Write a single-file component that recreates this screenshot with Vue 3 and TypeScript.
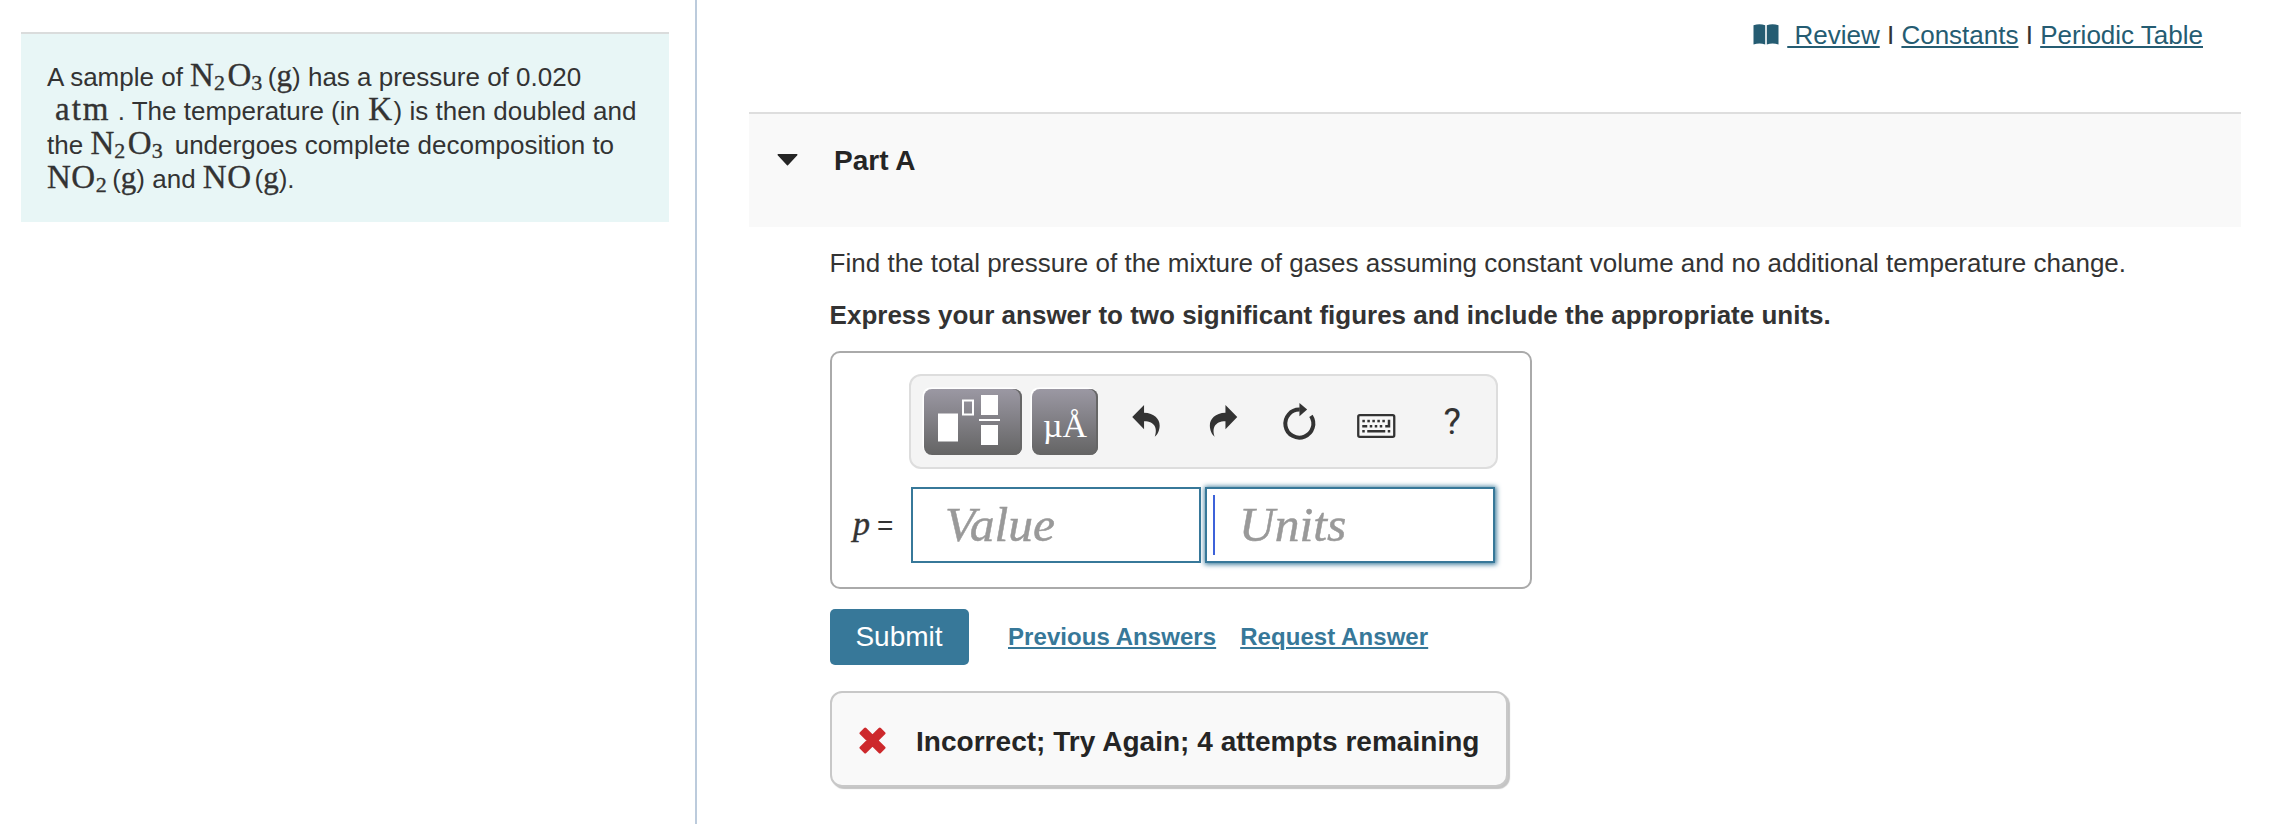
<script setup lang="ts">
import { ref } from 'vue'

const value = ref('')
const units = ref('')
const open = ref(true)
const attempts = 4
const topKeys = [-12.6, -7.6, -2.6, 2.4, 7.4]
const midKeys = [-5.2, -0.2, 4.8]
</script>

<template>
  <div class="page">
    <aside class="side">
      <div class="problem">
        <div class="line">A sample of <span class="m">N</span><sub>2</sub><span class="m thin">O</span><sub>3</sub><span class="state">(<span class="g">g</span>)</span> has a pressure of 0.020</div>
        <div class="line indent"><span class="m atm">atm</span> . The temperature (in <span class="m kelvin">K</span>) is then doubled and</div>
        <div class="line">the <span class="m">N</span><sub>2</sub><span class="m thin">O</span><sub class="wide">3</sub> undergoes complete decomposition to</div>
        <div class="line"><span class="m no">NO</span><sub>2</sub><span class="state">(<span class="g">g</span>)</span> and <span class="m no">NO</span><span class="state tight">(<span class="g">g</span>)</span>.</div>
      </div>
    </aside>

    <main class="content">
      <nav class="links">
        <svg class="book" width="26" height="21" viewBox="0 0 25 21">
          <path d="M0 1.3Q6-.8 11.7 1.3V20.4Q6 18.6 0 20.4ZM13.3 1.3Q19-.8 25 1.3V20.4Q19 18.6 13.3 20.4Z" fill="#255c72" />
        </svg>
        <span class="trio"><a class="review">&nbsp;Review</a> I <a>Constants</a> I <a>Periodic Table</a></span>
      </nav>

      <header class="part" @click="open = !open">
        <svg class="caret" width="21" height="12" viewBox="0 0 21 12">
          <path d="M1.2.8H19.8L10.5 10.7Z" fill="#252525" stroke="#252525" stroke-width="1.4" stroke-linejoin="round" />
        </svg>
        <h2>Part A</h2>
      </header>

      <section v-show="open" class="body">
        <p>Find the total pressure of the mixture of gases assuming constant volume and no additional temperature change.</p>
        <p class="strong">Express your answer to two significant figures and include the appropriate units.</p>

        <div class="answer">
          <div class="toolbar">
            <button class="tool templates">
              <svg width="98" height="66" viewBox="0 0 98 66">
                <g fill="#fff">
                  <rect x="14" y="24.5" width="20" height="28" />
                  <rect x="57" y="6" width="17" height="20" />
                  <rect x="55" y="30" width="21" height="2" />
                  <rect x="57" y="36" width="17" height="20" />
                </g>
                <rect x="39" y="11.5" width="10" height="14" fill="none" stroke="#fff" stroke-width="2" />
              </svg>
            </button>
            <button class="tool symbols"><span>µÅ</span></button>
            <div class="icons">
              <svg viewBox="-38 -33 76 66"><path d="M-14-5-2.2-17V-9.2C8-9 13.4-3 13.4 3.5 13.4 8 11.5 12.5 8.5 14.8 11.5 7 9-.8-2.2-.8V7.3Z" fill="#333" /></svg>
              <svg viewBox="-38 -33 76 66"><path d="M14-5 2.2-17V-9.2C-8-9-13.4-3-13.4 3.5-13.4 8-11.5 12.5-8.5 14.8-11.5 7-9-.8 2.2-.8V7.3Z" fill="#333" /></svg>
              <svg viewBox="-38 -33 76 66">
                <path d="M11.7-6.2A14 14 0 1 1 .5-12.4" fill="none" stroke="#333" stroke-width="4" />
                <path d="M.2-19 7.9-12.4 .2-5.8Z" fill="#333" />
              </svg>
              <svg viewBox="-38 -33 76 66">
                <rect x="-18" y="-6.8" width="36" height="21.6" rx="1.5" fill="#f7f7f7" stroke="#333" stroke-width="2.3" />
                <g fill="#333">
                  <rect v-for="x in topKeys" :key="'t' + x" :x="x - 1.3" y="-2.2" width="2.5" height="2.5" />
                  <rect v-for="x in midKeys" :key="'m' + x" :x="x - 1.3" y="3" width="2.5" height="2.5" />
                  <rect x="-14" y="3" width="5" height="2.5" />
                  <path d="M11.5-2.2H14V5.5H9V3H11.5Z" />
                  <rect x="-14" y="8" width="2.5" height="2.5" />
                  <rect x="-9" y="8" width="18" height="2.5" />
                  <rect x="11.5" y="8" width="2.5" height="2.5" />
                </g>
              </svg>
              <span class="help">?</span>
            </div>
          </div>
          <div class="fields">
            <label><i>p</i><span>=</span></label>
            <div class="field"><input v-model="value" placeholder="Value" /></div>
            <div class="field focus"><input v-model="units" placeholder="Units" /><span class="cursor"></span></div>
          </div>
        </div>

        <div class="actions">
          <button class="submit">Submit</button>
          <a>Previous Answers</a>
          <a class="request">Request Answer</a>
        </div>

        <div class="feedback">
          <svg width="27" height="27" viewBox="0 0 27 27">
            <path d="M6.2 2 13.5 9.3 20.8 2 25 6.2 17.7 13.5 25 20.8 20.8 25 13.5 17.7 6.2 25 2 20.8 9.3 13.5 2 6.2Z" fill="#cd292c" stroke="#cd292c" stroke-width="3" stroke-linejoin="round" />
          </svg>
          <span>Incorrect; Try Again; {{ attempts }} attempts remaining</span>
        </div>
      </section>
    </main>
  </div>
</template>

<style>
html, body { background: #fff; overflow: hidden; }
</style>

<style scoped>
* { box-sizing: border-box; }
.page {
  display: flex;
  height: 824px;
  font: 26px/34px "Liberation Sans", Arial, sans-serif;
  color: #333;
}
.side {
  width: 697px;
  flex: none;
  padding: 32px 26px 0 21px;
  border-right: 2px solid #bccbdc;
}
.problem {
  width: 648px;
  height: 190px;
  padding: 26px 0 0 26px;
  background: #e8f6f6;
  border-top: 2px solid #dadcdc;
}
.line { height: 34px; white-space: pre; }
.indent { padding-left: 8px; }
.m, .g, sub {
  font-family: "Liberation Serif", "Times New Roman", serif;
  line-height: 0;
  -webkit-text-stroke: 0.35px #333;
}
.m { font-size: 33px; }
.g { font-size: 31px; }
.atm { letter-spacing: 2px; }
.kelvin { margin: 0 1.5px 0 1px; }
.no { letter-spacing: 0.5px; }
sub { font-size: 22px; vertical-align: -3.5px; }
.thin { margin-left: 2.6px; }
.wide { margin-right: 4.8px; }
.state { margin-left: 5.5px; }
.tight { margin-left: 3px; }

.content { flex: 1; min-width: 0; padding-top: 20px; }
.links {
  display: flex;
  justify-content: flex-end;
  align-items: center;
  height: 30px;
  padding-right: 75px;
  font-size: 26px;
  line-height: 30px;
  gap: 8px;
}
.book { margin-bottom: 1px; }
.trio { white-space: pre; }
.links a {
  color: #255c72;
  text-decoration: underline;
  text-decoration-thickness: 2px;
  text-underline-offset: 2px;
}
.part {
  display: flex;
  height: 115px;
  margin: 62px 37px 0 52px;
  padding: 29px 0 0 28px;
  background: #f9f9f9;
  border-top: 2px solid #dedede;
}
.caret { margin-top: 11px; }
h2 { margin: 1px 0 0 36px; font-size: 28px; line-height: 34px; color: #252525; }
.body { padding: 19px 0 0 133px; }
p { margin: 0 0 18px; white-space: nowrap; margin-left: -0.4px; }
.strong { font-weight: bold; margin-bottom: 19px; }

.answer {
  width: 702px;
  height: 238px;
  border: 2px solid #aaa;
  border-radius: 10px;
  padding: 21px 0 0 18px;
}
.toolbar {
  display: flex;
  width: 589px;
  height: 95px;
  margin-left: 59px;
  padding: 13px 0 0 13px;
  background: #f4f4f4;
  border: 2px solid #ddd;
  border-radius: 12px;
}
.tool {
  height: 66px;
  padding: 0;
  border: 0;
  border-radius: 8px;
  background: linear-gradient(#9b98a3, #646464);
  box-shadow: -1.5px -1.5px 0 #fff, inset -2px 0 0 #666;
  color: #fff;
}
.tool svg { display: block; }
.templates { width: 98px; margin-right: 10px; }
.symbols {
  width: 66px;
  margin-right: 10px;
  font: 34px/66px "Liberation Serif", serif;
}
.symbols span { display: block; height: 66px; padding-top: 6px; line-height: 62px; }
.icons { display: flex; }
.icons svg { width: 76.5px; height: 66px; }
.help {
  width: 76.5px;
  text-align: center;
  font: 400 37px/66px Roboto, sans-serif;
}
.fields { display: flex; margin-top: 18px; height: 76px; }
label { display: flex; width: 61px; align-items: baseline; font-size: 28px; line-height: 72px; }
label i {
  width: 27px;
  padding-left: 3px;
  font: italic 34px/74px "Liberation Serif", serif;
  -webkit-text-stroke: 0.4px #333;
}
.field {
  position: relative;
  width: 290px;
  height: 76px;
  border: 2px solid #377899;
}
.focus { margin-left: 4px; box-shadow: 0 0 5px 1.5px #377899; background: #fff; }
input {
  width: 100%;
  height: 72px;
  border: 0;
  outline: 0;
  background: none;
  padding: 0 0 0 32px;
  font: italic 49.5px/72px "Liberation Serif", serif;
}
input::placeholder { color: #999; opacity: 1; -webkit-text-stroke: 0.5px #999; }
.cursor { position: absolute; left: 6px; top: 6px; width: 2px; height: 60px; background: #3d62d9; }

.actions { display: flex; margin-top: 20px; align-items: flex-start; }
.submit {
  width: 139px;
  height: 56px;
  padding: 0 1px 0 0;
  border: 0;
  border-radius: 5px;
  background: #377899;
  color: #fff;
  font: 28px/56px "Liberation Sans", Arial, sans-serif;
}
.actions a {
  margin: 11px 0 0 39px;
  font-size: 24px;
  font-weight: bold;
  letter-spacing: 0.06px;
  line-height: 34px;
  color: #377899;
  text-decoration: underline;
  text-decoration-thickness: 1.5px;
  text-underline-offset: 2px;
}
.actions .request { margin-left: 24px; }
.feedback {
  display: flex;
  align-items: center;
  width: 678px;
  height: 96px;
  margin-top: 26px;
  padding-left: 27px;
  background: #f9f9f9;
  border: 2px solid #c8c8c8;
  border-radius: 12px;
  box-shadow: 2px 2px 1px #c4c4c4;
  font-size: 28px;
  font-weight: bold;
  color: #252525;
}
.feedback svg { margin-top: 3px; }
.feedback span { margin: 5px 0 0 30px; white-space: nowrap; letter-spacing: 0.03px; }
</style>
